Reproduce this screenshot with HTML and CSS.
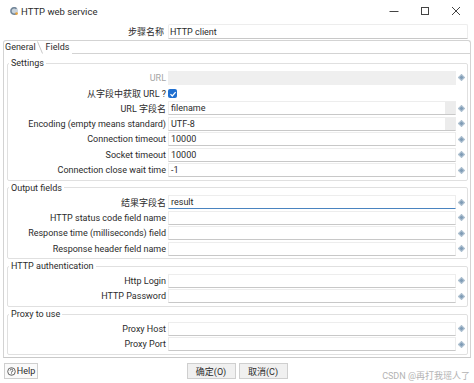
FILE: index.html
```html
<!DOCTYPE html>
<html lang="zh-CN">
<head>
    <meta charset="UTF-8">
    <title>HTTP web service</title>
    <link rel="stylesheet" href="styles.css">
</head>
<body>
    <div class="window">
        <div class="titlebar">
            <svg class="app-icon" width="10" height="10" viewBox="0 0 10 10">
                <circle cx="5" cy="5" r="4" fill="#c9d3dc"/>
                <path d="M7.5 2.8 A3.2 3.2 0 1 0 7.5 7.2" fill="none" stroke="#6f8396" stroke-width="1.4"/>
                <circle cx="7.6" cy="7.6" r="1.3" fill="#e8a33c"/>
            </svg>
            <span class="title">HTTP web service</span>
            <span class="win-btn">
                <svg width="10" height="10" viewBox="0 0 10 10"><path d="M0.5 5.5 H9.5" stroke="#444" stroke-width="1"/></svg>
            </span>
            <span class="win-btn">
                <svg width="10" height="10" viewBox="0 0 10 10"><rect x="1.5" y="1.5" width="7" height="7" fill="none" stroke="#444" stroke-width="1"/></svg>
            </span>
            <span class="win-btn">
                <svg width="10" height="10" viewBox="0 0 10 10"><path d="M1 1 L9 9 M9 1 L1 9" stroke="#444" stroke-width="1"/></svg>
            </span>
        </div>

        <div class="step-row">
            <label>步骤名称</label>
            <div class="field step-field">HTTP client</div>
        </div>

        <div class="folder">
            <div class="tabs">
                <span class="tab active">General</span>
                <svg class="tab-slant" width="6" height="13" viewBox="0 0 6 13"><path d="M0.5 0.5 L5.5 12.5" stroke="#c8c8c8" stroke-width="1" fill="none"/></svg>
                <span class="tab">Fields</span>
                <span class="tab-fill"></span>
            </div>

            <div class="panel">
                <fieldset class="group">
                    <legend>Settings</legend>
                    <div class="row">
                        <label class="disabled">URL</label>
                        <div class="field off"></div>
                        <span class="var"></span>
                    </div>
                    <div class="row">
                        <label>从字段中获取 URL ?</label>
                        <div><span class="check"><svg width="8" height="8" viewBox="0 0 8 8"><path d="M1.5 4.2 L3.3 6 L6.6 2.2" fill="none" stroke="#fff" stroke-width="1.2"/></svg></span></div>
                        <span></span>
                    </div>
                    <div class="row">
                        <label>URL 字段名</label>
                        <div class="field combo">filename<span class="drop"></span></div>
                        <span class="var"></span>
                    </div>
                    <div class="row">
                        <label>Encoding (empty means standard)</label>
                        <div class="field combo">UTF-8<span class="drop"></span></div>
                        <span class="var"></span>
                    </div>
                    <div class="row">
                        <label>Connection timeout</label>
                        <div class="field">10000</div>
                        <span class="var"></span>
                    </div>
                    <div class="row">
                        <label>Socket timeout</label>
                        <div class="field">10000</div>
                        <span class="var"></span>
                    </div>
                    <div class="row">
                        <label>Connection close wait time</label>
                        <div class="field">-1</div>
                        <span class="var"></span>
                    </div>
                </fieldset>

                <fieldset class="group">
                    <legend>Output fields</legend>
                    <div class="row">
                        <label>结果字段名</label>
                        <div class="field focus">result</div>
                        <span class="var"></span>
                    </div>
                    <div class="row">
                        <label>HTTP status code field name</label>
                        <div class="field"></div>
                        <span class="var"></span>
                    </div>
                    <div class="row">
                        <label>Response time (milliseconds) field</label>
                        <div class="field"></div>
                        <span class="var"></span>
                    </div>
                    <div class="row">
                        <label>Response header field name</label>
                        <div class="field"></div>
                        <span class="var"></span>
                    </div>
                </fieldset>

                <fieldset class="group">
                    <legend>HTTP authentication</legend>
                    <div class="row">
                        <label>Http Login</label>
                        <div class="field"></div>
                        <span class="var"></span>
                    </div>
                    <div class="row">
                        <label>HTTP Password</label>
                        <div class="field"></div>
                        <span class="var"></span>
                    </div>
                </fieldset>

                <fieldset class="group">
                    <legend>Proxy to use</legend>
                    <div class="row">
                        <label>Proxy Host</label>
                        <div class="field"></div>
                        <span class="var"></span>
                    </div>
                    <div class="row">
                        <label>Proxy Port</label>
                        <div class="field"></div>
                        <span class="var"></span>
                    </div>
                </fieldset>
            </div>
        </div>

        <div class="footer">
            <div class="footer-left">
                <button class="btn help">
                    <svg width="9" height="9" viewBox="0 0 9 9">
                        <circle cx="4.5" cy="4.5" r="3.8" fill="none" stroke="#555" stroke-width="0.9"/>
                        <path d="M3.2 3.5 A1.3 1.3 0 1 1 4.5 4.8 V5.6" fill="none" stroke="#555" stroke-width="0.9"/>
                        <circle cx="4.5" cy="6.8" r="0.5" fill="#555"/>
                    </svg>Help
                </button>
            </div>
            <div class="footer-center">
                <button class="btn">确定(O)</button>
                <button class="btn">取消(C)</button>
            </div>
            <div class="footer-right">
                <span class="watermark">CSDN @再打我瑶人了</span>
            </div>
        </div>
    </div>
</body>
</html>
```

FILE: styles.css
```css
body {
    margin: 0;
    font-family: Roboto, "Noto Sans CJK SC", sans-serif;
    font-size: 9px;
    color: #2b2b2b;
    background: #fff;
}

.window {
    width: 474px;
    height: 383px;
    display: flex;
    flex-direction: column;
}

/* title bar */
.titlebar {
    height: 22px;
    display: flex;
    align-items: center;
    padding-left: 9px;
    padding-right: 3px;
}

.app-icon {
    margin-right: 2px;
}

.title {
    flex: 1;
    font-size: 9.5px;
}

.win-btn {
    width: 31px;
    height: 22px;
    display: flex;
    align-items: center;
    justify-content: center;
}

/* step name */
.step-row {
    display: grid;
    grid-template-columns: 166px 1fr;
    column-gap: 2px;
    height: 15px;
    margin: 2px 6px 0 0;
    align-items: center;
}

label {
    text-align: right;
    padding-right: 2px;
    white-space: nowrap;
}

label.disabled {
    color: #a5a5a5;
}

/* inputs */
.field {
    height: 14px;
    box-sizing: border-box;
    border: 1px solid #ededed;
    border-bottom-color: #c8c8c8;
    background: #fff;
    padding-left: 2px;
    line-height: 12px;
    display: flex;
    align-items: center;
}

.step-field {
    height: 15px;
    border-radius: 2px 2px 0 0;
    padding-left: 1px;
}

.field.off {
    background: #efefef;
    border-color: #efefef;
}

.field.combo {
    position: relative;
}

.field .drop {
    position: absolute;
    right: 0;
    top: 0;
    bottom: 0;
    width: 10px;
    background: #ececec;
}

.field.focus {
    border-bottom-color: #4a84c0;
}

.var {
    justify-self: center;
    width: 3px;
    height: 3px;
    background: #7f9cb6;
    transform: rotate(45deg);
    border: 1px solid #b3c4d3;
}

.check {
    display: inline-flex;
    align-items: center;
    justify-content: center;
    width: 9px;
    height: 9px;
    border-radius: 2px;
    background: #1f6fd0;
    vertical-align: middle;
}

/* tab folder */
.folder {
    margin: 1px 3px 0;
    height: 318px;
    box-sizing: border-box;
    border: 1px solid #d3d3d3;
    border-bottom-color: #c9c9c9;
    border-radius: 3px 3px 0 0;
    display: flex;
    flex-direction: column;
}

.tabs {
    display: flex;
    height: 13px;
    align-items: stretch;
}

.tab {
    padding: 0 1px;
    line-height: 13px;
}

.tab.active {
    padding-left: 1px;
    padding-right: 0;
}

.tab-slant {
    margin: 0 2px 0 1px;
}

.tab-fill {
    flex: 1;
    border-bottom: 1px solid #d3d3d3;
    margin-left: 2px;
}

.panel {
    padding: 2px 2px 0 3px;
}

.group {
    margin: 0;
    padding: 0 0 2px;
    border: 1px solid #e0e0e0;
    border-radius: 2px;
}

.group legend {
    padding: 0 2px;
    margin-left: 1px;
    line-height: 14px;
}

.row {
    display: grid;
    grid-template-columns: 160px 1fr 11px;
    height: 15.4px;
    align-items: center;
}

/* footer */
.footer {
    flex: 1;
    display: grid;
    grid-template-columns: 1fr auto 1fr;
    align-items: start;
    padding-top: 5px;
}

.footer-left {
    padding-left: 4px;
}

.footer-center {
    display: flex;
    gap: 3px;
}

.footer-right {
    text-align: right;
    padding: 6px 4px 0 0;
}

.btn {
    font-family: Roboto, "Noto Sans CJK SC", sans-serif;
    font-size: 9px;
    color: #2b2b2b;
    height: 16px;
    width: 49px;
    padding: 0;
    border: 1px solid #cfcfcf;
    background: #f0f0f0;
    display: inline-flex;
    align-items: center;
    justify-content: center;
}

.btn.help {
    width: 34px;
    background: #fafafa;
    gap: 1px;
}

.watermark {
    color: #b3b3b3;
    font-size: 9px;
    white-space: nowrap;
}
```
